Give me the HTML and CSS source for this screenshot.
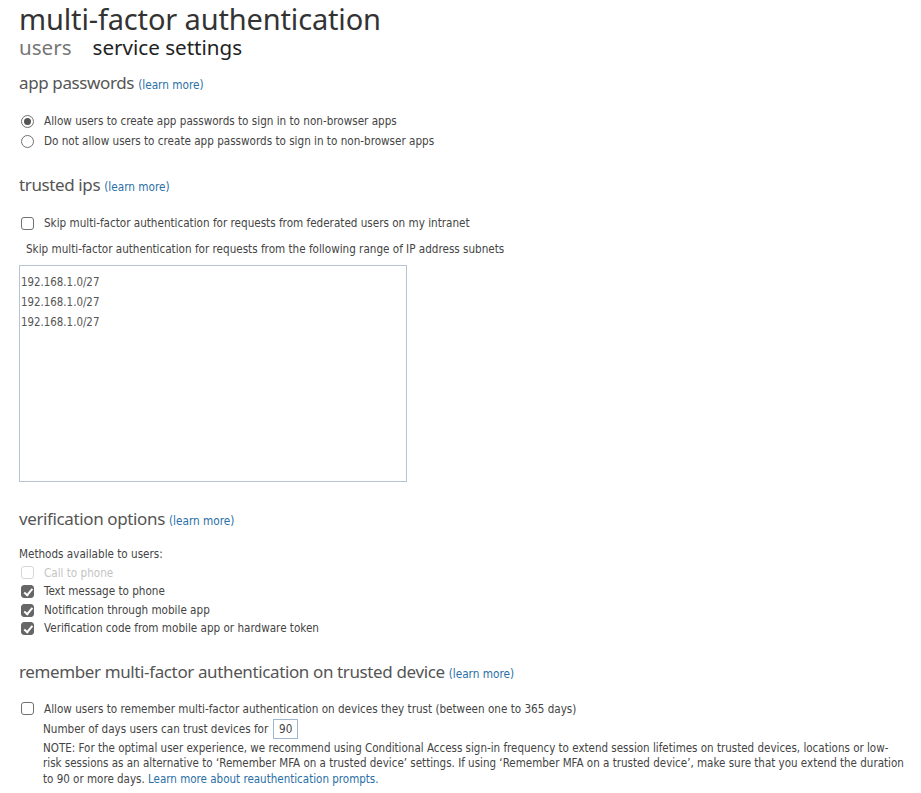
FILE: index.html
```html
<!DOCTYPE html>
<html>
<head>
<meta charset="utf-8">
<link rel="stylesheet" href="styles.css">
</head>
<body>
<div class="page">
  <h1 class="title">multi-factor authentication</h1>
  <div class="tabs"><span class="tab">users</span><span class="tab active">service settings</span></div>

  <section class="sec sec-app">
    <h2 class="sec-h">app passwords <a class="learn" href="#">(learn more)</a></h2>
    <div class="opts">
      <div class="opt"><span class="radio on"></span><span>Allow users to create app passwords to sign in to non-browser apps</span></div>
      <div class="opt"><span class="radio"></span><span>Do not allow users to create app passwords to sign in to non-browser apps</span></div>
    </div>
  </section>

  <section class="sec sec-ips">
    <h2 class="sec-h">trusted ips <a class="learn" href="#">(learn more)</a></h2>
    <div class="opts">
      <div class="opt"><span class="cb"></span><span>Skip multi-factor authentication for requests from federated users on my intranet</span></div>
    </div>
    <div class="subnet-label">Skip multi-factor authentication for requests from the following range of IP address subnets</div>
    <div class="ipbox">
      <div class="ipline">192.168.1.0/27</div>
      <div class="ipline">192.168.1.0/27</div>
      <div class="ipline">192.168.1.0/27</div>
    </div>
  </section>

  <section class="sec sec-ver">
    <h2 class="sec-h">verification options <a class="learn" href="#">(learn more)</a></h2>
    <div class="methods">
      <div class="mline">Methods available to users:</div>
      <div class="opt mline disabled"><span class="cb dis"></span><span>Call to phone</span></div>
      <div class="opt mline"><span class="cb on"></span><span>Text message to phone</span></div>
      <div class="opt mline"><span class="cb on"></span><span>Notification through mobile app</span></div>
      <div class="opt mline"><span class="cb on"></span><span>Verification code from mobile app or hardware token</span></div>
    </div>
  </section>

  <section class="sec sec-rem">
    <h2 class="sec-h">remember multi-factor authentication on trusted device <a class="learn" href="#">(learn more)</a></h2>
    <div class="opts">
      <div class="opt"><span class="cb"></span><span>Allow users to remember multi-factor authentication on devices they trust (between one to 365 days)</span></div>
    </div>
    <div class="days">Number of days users can trust devices for <span class="daysbox">90</span></div>
    <p class="note">NOTE: For the optimal user experience, we recommend using Conditional Access sign-in frequency to extend session lifetimes on trusted devices, locations or low-<br>risk sessions as an alternative to ‘Remember MFA on a trusted device’ settings. If using ‘Remember MFA on a trusted device’, make sure that you extend the duration<br>to 90 or more days. <a class="link" href="#">Learn more about reauthentication prompts.</a></p>
  </section>
</div>
</body>
</html>
```

FILE: styles.css
```css
html, body {
  margin: 0;
  padding: 0;
  background: #fff;
}
body {
  font-family: "DejaVu Sans Condensed", "DejaVu Sans", sans-serif;
  font-size: 11.6px;
  color: #444;
}
.page {
  padding: 0 0 0 19px;
  width: 895px;
}
.title {
  margin: 0;
  font-family: "Noto Sans", "Open Sans", sans-serif;
  font-weight: 400;
  font-size: 29px;
  line-height: 37px;
  height: 37px;
  color: #333;
  letter-spacing: -0.15px;
}
.tabs {
  display: flex;
  gap: 21px;
  font-family: "Noto Sans", "Open Sans", sans-serif;
  font-size: 20.6px;
  line-height: 21px;
  height: 21px;
}
.tab { color: #777; }
.tab.active { color: #222; }

.sec-h {
  margin: 0;
  font-family: "Noto Sans", "Open Sans", sans-serif;
  font-weight: 400;
  font-size: 17px;
  letter-spacing: -0.38px;
  line-height: 24px;
  height: 24px;
  color: #555;
}
.learn {
  font-family: "DejaVu Sans Condensed", "DejaVu Sans", sans-serif;
  font-size: 11.7px;
  letter-spacing: 0;
  line-height: 1;
  color: #2a6fa6;
  text-decoration: none;
}
.sec-app { margin-top: 13px; }
.sec-app .opts { margin-top: 16px; }
.sec-ips { margin-top: 22px; }
.sec-ips .opts { margin-top: 16px; }
.sec-ver { margin-top: 25px; }
.sec-rem { margin-top: 22px; }
.sec-rem .opts { margin-top: 15px; }

.opt {
  display: flex;
  align-items: center;
  gap: 10px;
  height: 20px;
  padding-left: 2px;
}
.radio, .cb {
  flex: none;
  width: 13px;
  height: 13px;
  box-sizing: border-box;
  border: 1px solid #707070;
  background: #fff;
  position: relative;
}
.radio { border-radius: 50%; }
.radio.on::after {
  content: "";
  position: absolute;
  left: 2px; top: 2px;
  width: 7px; height: 7px;
  border-radius: 50%;
  background: #555;
}
.cb { border-radius: 3px; }
.cb.on {
  background: #666;
  border-color: #666;
}
.cb.on::after {
  content: "";
  position: absolute;
  left: 4px; top: 1px;
  width: 3px; height: 6.5px;
  border: solid #fff;
  border-width: 0 2px 2px 0;
  transform: rotate(40deg);
}
.cb.dis { border-color: #d6d6d6; }
.disabled { color: #c4c4c4; }

.subnet-label {
  margin-top: 6px;
  padding-left: 7px;
  line-height: 20px;
}
.ipbox {
  margin-top: 6px;
  width: 388px;
  height: 217px;
  box-sizing: border-box;
  border: 1px solid #b7c5d3;
  padding: 6px 0 0 1px;
  font-size: 11.4px;
  color: #555;
}
.ipline { line-height: 20px; }

.methods { margin-top: 14px; }
.mline { height: 18.6px; line-height: 18.6px; }

.days {
  display: flex;
  align-items: center;
  gap: 5px;
  padding-left: 24px;
  height: 20px;
}
.daysbox {
  box-sizing: border-box;
  height: 20px;
  width: 25px;
  border: 1px solid #9fb8cf;
  text-align: center;
  line-height: 18px;
}
.note {
  margin: 2px 0 0;
  padding-left: 24px;
  font-size: 11.5px;
  line-height: 15.5px;
  white-space: nowrap;
}
.link { color: #2a6fa6; text-decoration: none; }
```
